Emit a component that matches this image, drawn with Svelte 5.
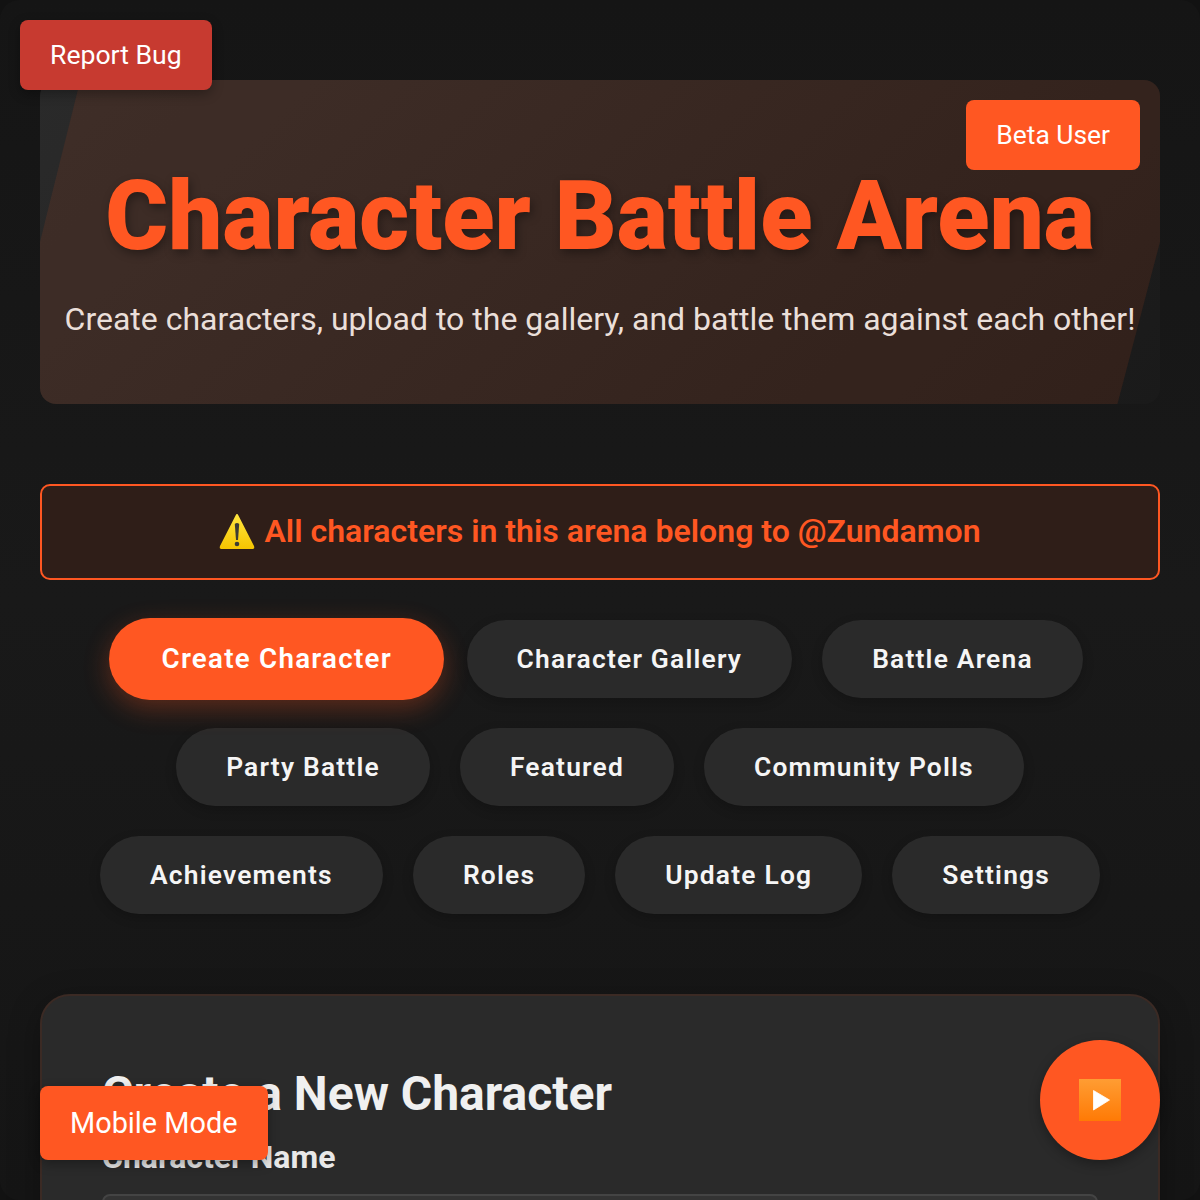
<script>
  const tabs = ['Create Character', 'Character Gallery', 'Battle Arena', 'Party Battle', 'Featured', 'Community Polls', 'Achievements', 'Roles', 'Update Log', 'Settings'];
  let active = $state('Create Character');
</script>

<div class="page">
  <button class="float report">Report Bug</button>
  <button class="float mobile">Mobile Mode</button>
  <button class="float music" aria-label="Play music">
    <svg width="42" height="42" viewBox="0 0 42 42">
      <defs>
        <linearGradient id="playbg" x1="0" y1="0" x2="0" y2="1">
          <stop offset="0" stop-color="#ff9d33" />
          <stop offset="1" stop-color="#ff7a05" />
        </linearGradient>
      </defs>
      <rect width="42" height="42" fill="url(#playbg)" />
      <path d="M14.5 11.5 L30.5 21 L14.5 31 Z" fill="#fff" stroke="#fff" stroke-width="0.8" stroke-linejoin="round" />
    </svg>
  </button>

  <div class="container">
    <header>
      <div class="badge">Beta User</div>
      <h1>Character Battle Arena</h1>
      <p>Create characters, upload to the gallery, and battle them against each other!</p>
    </header>

    <div class="notice">
      <svg class="warn" width="37" height="37" viewBox="0 0 37 37" aria-hidden="true">
        <defs>
          <linearGradient id="warnbg" x1="0" y1="0" x2="0" y2="1">
            <stop offset="0" stop-color="#ffe640" />
            <stop offset="1" stop-color="#f5c400" />
          </linearGradient>
        </defs>
        <path d="M18 1 Q18.8 1 19.3 2.2 L35 33 Q36 36 33.5 36 L2.5 36 Q0 36 1 33 L16.7 2.2 Q17.2 1 18 1 Z" fill="url(#warnbg)" />
        <path d="M15.8 11 Q18 9.2 20.2 11 L19 27 L17 27 Z" fill="#3c3c34" />
        <circle cx="18" cy="31" r="2.3" fill="#3c3c34" />
      </svg>
      All characters in this arena belong to @Zundamon
    </div>

    <nav>
      {#each tabs as tab}
        <button class="tab" class:active={active === tab} onclick={() => (active = tab)}>{tab}</button>
      {/each}
    </nav>

    <section>
      <h2>Create a New Character</h2>
      <label for="cname">Character Name</label>
      <input id="cname" type="text" />
    </section>
  </div>
</div>

<style>
  :global(body) {
    margin: 0;
    background: #121212;
    font-family: Roboto, "Noto Sans", sans-serif;
    color: #f5f5f5;
    overflow: hidden;
  }
  .page {
    height: 1200px;
    overflow: hidden;
    position: relative;
  }
  .container {
    height: 1200px;
    box-sizing: border-box;
    padding: 40px 40px;
    background: linear-gradient(180deg, #151515, #191919 50%, #151515);
    border-radius: 20px;
  }
  header {
    position: relative;
    margin-top: 40px;
    height: 324px;
    box-sizing: border-box;
    padding-top: 82px;
    border-radius: 16px;
    text-align: center;
    background: linear-gradient(135deg, #2a2a2a, #1a1a1a);
    overflow: hidden;
  }
  header::before {
    content: "";
    position: absolute;
    inset: 0;
    background: rgba(255, 87, 34, 0.1);
    clip-path: polygon(3.6% 0, 100% 0, 100% 50%, 96.2% 100%, 0 100%, 0 50%);
  }
  h1 {
    position: relative;
    margin: 0;
    font-size: 96px;
    line-height: 108px;
    font-weight: 900;
    color: #ff5722;
    text-shadow: 2px 4px 10px rgba(0, 0, 0, 0.35);
  }
  header p {
    position: relative;
    margin: 28px 0 0;
    font-size: 32px;
    line-height: 42px;
    color: #eadfd9;
  }
  .badge {
    position: absolute;
    z-index: 1;
    top: 20px;
    right: 20px;
    padding: 0 30px;
    height: 70px;
    line-height: 70px;
    background: #ff5722;
    color: #fff;
    font-size: 26.4px;
    border-radius: 8px;
  }
  .notice {
    margin-top: 80px;
    height: 96px;
    box-sizing: border-box;
    line-height: 90px;
    border: 2px solid #ff5722;
    border-radius: 10px;
    text-align: center;
    font-size: 32.06px;
    font-weight: 600;
    color: #ff5722;
    background: #2f1e18;
  }
  .warn {
    vertical-align: -8px;
  }
  nav {
    display: flex;
    flex-wrap: wrap;
    justify-content: center;
    gap: 30px;
    margin-top: 40px;
  }
  .tab {
    height: 78px;
    padding: 0 50px;
    border: none;
    border-radius: 39px;
    background: #2a2a2a;
    color: #f5f5f5;
    font-family: inherit;
    font-size: 26.4px;
    font-weight: 600;
    letter-spacing: 1.2px;
    box-shadow: 0 4px 12px rgba(0, 0, 0, 0.2);
  }
  .tab.active {
    background: #ff5722;
    color: #fff;
    transform: scale(1.05);
    box-shadow: 0 8px 24px rgba(255, 87, 34, 0.3);
  }
  section {
    margin-top: 80px;
    padding: 70px 60px;
    height: 400px;
    background: #2a2a2a;
    border: 2px solid #3b2a24;
    border-radius: 30px;
    box-shadow: 0 8px 32px rgba(0, 0, 0, 0.3);
  }
  h2 {
    margin: 0;
    font-size: 48px;
    line-height: 56px;
    font-weight: 700;
    color: #f0f0f0;
  }
  label {
    display: block;
    margin-top: 15px;
    font-size: 32px;
    line-height: 40px;
    font-weight: 700;
    color: #e8e8e8;
  }
  input {
    display: block;
    width: 100%;
    box-sizing: border-box;
    height: 70px;
    margin-top: 17px;
    background: #333;
    border: 2px solid #444;
    border-radius: 8px;
  }
  .float {
    position: absolute;
    z-index: 10;
    border: none;
    color: #fff;
    font-family: inherit;
    font-size: 26.6px;
    border-radius: 8px;
    padding: 0 30px;
    height: 70px;
    box-shadow: 0 4px 12px rgba(0, 0, 0, 0.3);
  }
  .report {
    top: 20px;
    left: 20px;
    padding-bottom: 2px;
    background: #c73a30;
  }
  .mobile {
    top: 1086px;
    left: 40px;
    height: 74px;
    background: #ff5722;
    font-size: 28.85px;
  }
  .music {
    top: 1040px;
    left: 1040px;
    width: 120px;
    height: 120px;
    padding: 0;
    border-radius: 50%;
    background: #ff5722;
    display: flex;
    align-items: center;
    justify-content: center;
  }
</style>
